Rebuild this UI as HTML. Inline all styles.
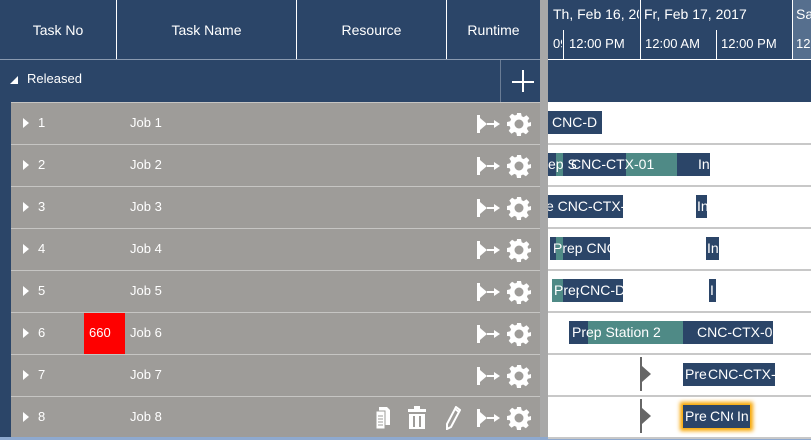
<!DOCTYPE html>
<html><head><meta charset="utf-8"><style>
*{margin:0;padding:0;box-sizing:border-box}
body{width:811px;height:440px;overflow:hidden;background:#fff;font-family:"Segoe UI","Liberation Sans",sans-serif;font-size:13px;color:#fff;position:relative}
.a{position:absolute}
.hd{background:#2b4568;top:0;height:59px}
.hc{top:0;height:59px;display:flex;align-items:center;justify-content:center;font-size:14px;border-right:1px solid #fff}
.row{left:11px;width:529px;height:42px;background:#9e9c99;border-top:1px solid #c6c5c3}
.row span{position:absolute;top:12px;font-size:13px}
.tri{position:absolute;left:12px;top:15px;width:0;height:0;border-left:6px solid #fff;border-top:5px solid transparent;border-bottom:5px solid transparent}
.gl{left:548px;width:263px;height:2px;background:#c8c8c8}
.bar{position:absolute;height:23px;background:#2b4568;overflow:hidden;white-space:nowrap;font-size:14px;line-height:23px}
.teal{position:absolute;height:23px;background:#4f8a86}
.bt{position:absolute;top:0;line-height:23px}
</style></head><body>
<div class="a hd" style="left:0;width:811px"></div>
<div class="a" style="left:0;top:59px;width:548px;height:1px;background:#8a9ab0"></div>
<div class="a hc" style="left:0;width:117px">Task No</div>
<div class="a hc" style="left:117px;width:180px">Task Name</div>
<div class="a hc" style="left:297px;width:150px">Resource</div>
<div class="a hc" style="left:447px;width:93px;border:none">Runtime</div>
<div class="a" style="left:792px;top:0;width:19px;height:59px;background:#566f8e"></div>
<div class="a" style="left:640px;top:0;width:1px;height:59px;background:#fff"></div>
<div class="a" style="left:792px;top:0;width:1px;height:59px;background:#fff"></div>
<div class="a" style="left:563px;top:30px;width:1px;height:29px;background:#fff"></div>
<div class="a" style="left:716px;top:30px;width:1px;height:29px;background:#fff"></div>
<div class="a" style="left:553px;top:6px;font-size:14px;width:86px;overflow:hidden;white-space:nowrap">Th, Feb 16, 2017</div>
<div class="a" style="left:644px;top:6px;font-size:14px">Fr, Feb 17, 2017</div>
<div class="a" style="left:796px;top:6px;font-size:14px">Sa</div>
<div class="a" style="left:553px;top:36px;width:9px;overflow:hidden">09</div>
<div class="a" style="left:569px;top:36px">12:00 PM</div>
<div class="a" style="left:645px;top:36px">12:00 AM</div>
<div class="a" style="left:721px;top:36px">12:00 PM</div>
<div class="a" style="left:796px;top:36px">12</div>
<div class="a" style="left:0;top:60px;width:811px;height:42px;background:#2b4568"></div>
<div class="a" style="left:0;top:102px;width:11px;height:335px;background:#2b4568"></div>
<div class="a" style="left:10px;top:76px;width:0;height:0;border-left:8px solid transparent;border-bottom:8px solid #fff"></div>
<div class="a" style="left:27px;top:71px;font-size:13px">Released</div>
<div class="a" style="left:500px;top:60px;width:1px;height:42px;background:#6a7c95"></div>
<div class="a" style="left:512px;top:81px;width:22px;height:2px;background:#fff"></div>
<div class="a" style="left:522px;top:70px;width:2px;height:22px;background:#fff"></div>
<div class="a" style="left:540px;top:0;width:8px;height:437px;background:#a8a8a8"></div>
<div class="a" style="left:0;top:437px;width:811px;height:3px;background:#8ea9cf"></div>
<div id="rows"></div>
<script>
var ys=[102,144,186,228,270,312,354,396];
var gear='<svg class="a" style="left:496px;top:9px" width="24" height="24" viewBox="0 0 24 24"><path fill="#fff" d="M10 1h4l.7 3.2 2 .9 2.8-1.8 2.8 2.8-1.8 2.8.9 2L24 10v4l-3.2.7-.9 2 1.8 2.8-2.8 2.8-2.8-1.8-2 .9L14 24h-4l-.7-3.2-2-.9-2.8 1.8-2.8-2.8 1.8-2.8-.9-2L0 14v-4l3.2-.7.9-2L2.3 4.5l2.8-2.8 2.8 1.8 2-.9z M12 7.5a4.5 4.5 0 1 0 0 9a4.5 4.5 0 1 0 0-9z" fill-rule="evenodd"/></svg>';
var arr='<svg class="a" style="left:466px;top:11px" width="26" height="20" viewBox="0 0 26 20"><rect x="0" y="1" width="3" height="18" fill="#fff"/><path d="M3 4 L10 10 L3 16z" fill="#fff"/><rect x="10" y="9" width="10" height="2" fill="#fff"/><path d="M17 6 L23 10 L17 14z" fill="#fff"/></svg>';
var h='';
for(var i=0;i<8;i++){
 h+='<div class="a row" style="top:'+ys[i]+'px'+(i==7?';height:41px':'')+'"><div class="tri"></div><span style="left:27px">'+(i+1)+'</span><span style="left:119px">Job '+(i+1)+'</span>'+arr+gear;
 if(i==5)h+='<div class="a" style="left:73px;top:0;width:41px;height:41px;background:#fe0000"></div><span style="left:78px">660</span>';
 if(i==7){
  h+='<svg class="a" style="left:363px;top:9px" width="18" height="24" viewBox="0 0 18 24"><path d="M5 1h8l3 3v15H5z" fill="#fff"/><path d="M2 5h9v18H2z" fill="#fff" stroke="#9e9c99" stroke-width="1"/><path d="M4 10h5M4 13h5M4 16h5M4 19h5" stroke="#9e9c99" stroke-width="1"/></svg>';
  h+='<svg class="a" style="left:397px;top:9px" width="18" height="24" viewBox="0 0 18 24"><rect x="0" y="3" width="18" height="3" fill="#fff"/><rect x="6" y="0" width="6" height="3" fill="#fff"/><rect x="1" y="8" width="16" height="15" fill="#fff"/><rect x="5" y="10" width="2" height="11" fill="#9e9c99"/><rect x="11" y="10" width="2" height="11" fill="#9e9c99"/></svg>';
  h+='<svg class="a" style="left:434px;top:9px" width="16" height="24" viewBox="0 0 16 24"><path d="M11 1l4 3L6 21 2 23l0-5z" fill="none" stroke="#fff" stroke-width="2"/><path d="M10 3l4 3" stroke="#fff" stroke-width="2"/></svg>';
 }
 h+='</div>';
 h+='<div class="a gl" style="top:'+(ys[i]+41)+'px"></div>';
}
document.getElementById('rows').innerHTML=h;
</script>
<div class="bar" style="left:548px;top:111px;width:54px"><span class="bt" style="left:4px">CNC-D</span></div>
<div class="bar" style="left:548px;top:153px;width:149px"><div class="teal" style="left:8px;width:7px"></div><div class="teal" style="left:78px;width:51px"></div><span class="bt" style="left:0">ep S</span><span class="bt" style="left:23px">CNC-CTX-01</span></div>
<div class="bar" style="left:697px;top:153px;width:13px"><span class="bt" style="left:1px">In</span></div>
<div class="bar" style="left:548px;top:195px;width:75px"><span class="bt" style="left:-2px">e CNC-CTX-0</span></div>
<div class="bar" style="left:696px;top:195px;width:11px"><span class="bt" style="left:1px">In</span></div>
<div class="bar" style="left:550px;top:237px;width:60px"><div class="teal" style="left:6px;width:7px"></div><span class="bt" style="left:3px">Prep CNC</span></div>
<div class="bar" style="left:706px;top:237px;width:13px"><span class="bt" style="left:1px">In</span></div>
<div class="bar" style="left:552px;top:279px;width:71px"><div class="teal" style="left:0;width:11px"></div><span class="bt" style="left:2px">Prep</span><span class="bt" style="left:27px;background:#2b4568;padding-left:1px">CNC-D</span></div>
<div class="bar" style="left:709px;top:279px;width:7px"><span class="bt" style="left:1px">I</span></div>
<div class="bar" style="left:569px;top:321px;width:204px"><div class="teal" style="left:19px;width:95px"></div><span class="bt" style="left:3px">Prep Station 2</span><span class="bt" style="left:128px">CNC-CTX-01</span></div>
<div class="a" style="left:640px;top:357px;width:2px;height:34px;background:#666"></div>
<div class="a" style="left:642px;top:366px;width:0;height:0;border-left:9px solid #666;border-top:8px solid transparent;border-bottom:8px solid transparent"></div>
<div class="bar" style="left:683px;top:363px;width:92px"><span class="bt" style="left:2px">Pre</span><span class="bt" style="left:24px;background:#2b4568;padding-left:1px">CNC-CTX-0</span></div>
<div class="a" style="left:640px;top:399px;width:2px;height:34px;background:#666"></div>
<div class="a" style="left:642px;top:408px;width:0;height:0;border-left:9px solid #666;border-top:8px solid transparent;border-bottom:8px solid transparent"></div>
<div class="bar" style="left:683px;top:405px;width:67px;box-shadow:0 0 4px 3px #f7a600"><span class="bt" style="left:2px">Pre</span><span class="bt" style="left:26px;background:#2b4568;padding-left:1px;width:24px;overflow:hidden">CNC</span><span class="bt" style="left:53px;background:#2b4568;padding-left:1px">In</span></div>
</body></html>
